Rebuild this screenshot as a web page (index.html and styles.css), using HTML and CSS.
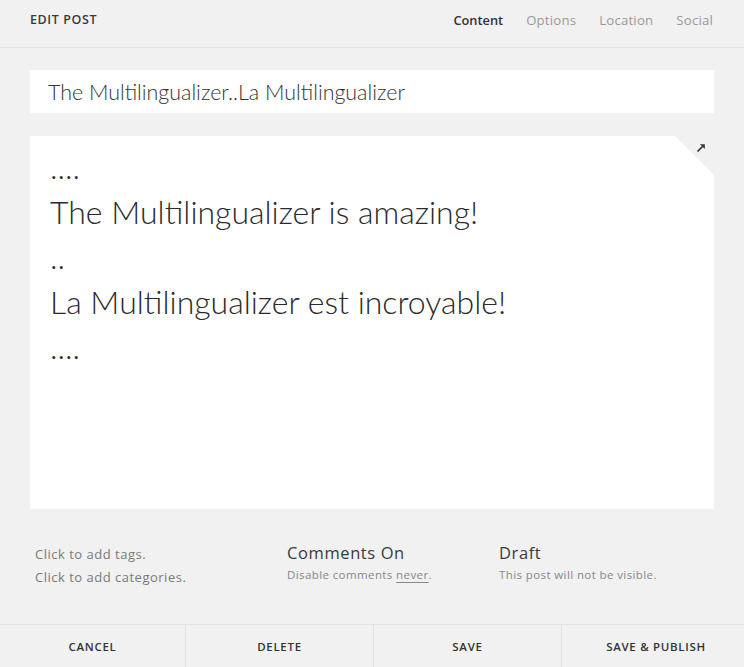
FILE: index.html
```html
<!DOCTYPE html>
<html lang="en">
<head>
<meta charset="utf-8">
<title>Edit Post</title>
<link rel="stylesheet" href="styles.css">
</head>
<body>
<div class="page">
  <header class="topbar">
    <div class="page-title">EDIT POST</div>
    <nav class="tabs">
      <span class="tab active">Content</span>
      <span class="tab">Options</span>
      <span class="tab">Location</span>
      <span class="tab">Social</span>
    </nav>
  </header>

  <main class="content">
    <div class="title-field">The Multilingualizer..La Multilingualizer</div>

    <div class="editor-wrap">
      <div class="editor">
        <p class="line">....</p>
        <p class="line">The Multilingualizer is amazing!</p>
        <p class="line">..</p>
        <p class="line">La Multilingualizer est incroyable!</p>
        <p class="line">....</p>
      </div>
      <svg class="expand" viewBox="0 0 10 10" width="10" height="10" aria-hidden="true">
        <path d="M1.5 8.5 L6.5 3.5" stroke="#333" stroke-width="1.7" fill="none"/>
        <polygon points="4,1.2 8.8,1.2 8.8,6" fill="#333"/>
      </svg>
    </div>

    <div class="meta">
      <div class="meta-col taxonomy">
        <div class="meta-link">Click to add tags.</div>
        <div class="meta-link">Click to add categories.</div>
      </div>
      <div class="meta-col comments">
        <div class="meta-head">Comments On</div>
        <div class="meta-sub">Disable comments <span class="u">never</span>.</div>
      </div>
      <div class="meta-col status">
        <div class="meta-head">Draft</div>
        <div class="meta-sub">This post will not be visible.</div>
      </div>
    </div>
  </main>

  <footer class="actions">
    <div class="btn">CANCEL</div>
    <div class="btn">DELETE</div>
    <div class="btn">SAVE</div>
    <div class="btn">SAVE &amp; PUBLISH</div>
  </footer>
</div>
</body>
</html>
```

FILE: styles.css
```css
* { box-sizing: border-box; }

html, body {
  margin: 0;
  padding: 0;
  background: #f1f1f1;
}

body {
  font-family: "Open Sans", "Noto Sans", "Liberation Sans", sans-serif;
  color: #333;
}

.page {
  height: 100vh;
  display: flex;
  flex-direction: column;
}

/* top bar */
.topbar {
  height: 48px;
  border-bottom: 1px solid #e1e1e1;
  display: flex;
  justify-content: space-between;
  align-items: flex-start;
  padding: 11px 31px 0 30px;
}

.page-title {
  font-size: 12.5px;
  font-weight: 600;
  letter-spacing: 0.6px;
  color: #3a3a3a;
  line-height: 18px;
}

.tabs {
  display: flex;
  gap: 23px;
}

.tab {
  font-size: 13.2px;
  line-height: 18px;
  color: #999;
  letter-spacing: 0.2px;
}

.tab.active {
  color: #333;
  font-weight: 600;
  letter-spacing: 0;
  font-size: 12.8px;
}

/* content */
.content {
  flex: 1;
  padding: 22px 30px 0 30px;
}

.title-field {
  background: #fff;
  height: 43px;
  padding: 0 18px;
  font-family: "Lato", "Liberation Sans", sans-serif;
  font-weight: 300;
  font-size: 21.4px;
  line-height: 45px;
  color: #333;
  margin-bottom: 23px;
}

.editor-wrap {
  position: relative;
}

.editor {
  background: #fff;
  height: 373px;
  padding: 8px 20px 0 20px;
  clip-path: polygon(0 0, calc(100% - 39px) 0, 100% 39px, 100% 100%, 0 100%);
  font-family: "Lato", "Liberation Sans", sans-serif;
  font-weight: 300;
  font-size: 32px;
  color: #2a2a2a;
}

.line {
  margin: 0;
  line-height: 45px;
}

.expand {
  position: absolute;
  top: 7px;
  right: 8px;
}

/* meta */
.meta {
  display: flex;
  padding: 34px 0 0 5px;
}

.meta-col.taxonomy { width: 252px; }
.meta-col.comments { width: 212px; }

.meta-link {
  font-size: 13px;
  color: #7a7a7a;
  line-height: 24px;
  letter-spacing: 0.5px;
  margin-top: -1px;
}

.meta-head {
  font-size: 16.5px;
  color: #3a3a3a;
  line-height: 22px;
  letter-spacing: 0.6px;
  margin-top: -1px;
}

.meta-sub {
  font-size: 11.5px;
  color: #888;
  line-height: 22px;
  letter-spacing: 0.4px;
}

.u {
  text-decoration: underline;
  text-underline-offset: 3px;
}

/* bottom actions */
.actions {
  height: 43px;
  border-top: 1px solid #e1e1e1;
  display: grid;
  grid-template-columns: 185px 188px 188px 1fr;
}

.btn {
  display: flex;
  align-items: center;
  justify-content: center;
  font-size: 11.5px;
  font-weight: 600;
  letter-spacing: 0.7px;
  color: #333;
  border-left: 1px solid #e1e1e1;
}

.btn:first-child { border-left: none; }
.btn:last-child { padding-left: 6px; }
```
